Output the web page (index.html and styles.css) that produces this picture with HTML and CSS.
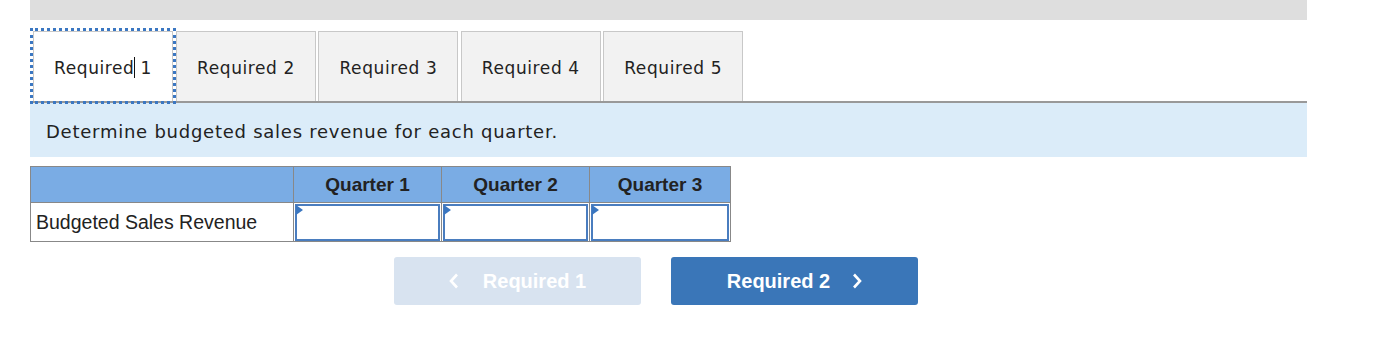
FILE: index.html
```html
<!DOCTYPE html>
<html lang="en">
<head>
    <meta charset="UTF-8">
    <title>Required 1</title>
    <link rel="stylesheet" href="styles.css">
</head>
<body>
    <div class="wrap">
        <div class="topbar"></div>

        <div class="tabs">
            <div class="tab active">Required<span class="caret"></span>&nbsp;1</div>
            <div class="tab">Required 2</div>
            <div class="tab">Required 3</div>
            <div class="tab">Required 4</div>
            <div class="tab">Required 5</div>
        </div>

        <div class="question">Determine budgeted sales revenue for each quarter.</div>

        <table class="grid">
            <tr>
                <th class="blank"></th>
                <th>Quarter 1</th>
                <th>Quarter 2</th>
                <th class="last">Quarter 3</th>
            </tr>
            <tr>
                <td class="label">Budgeted Sales Revenue</td>
                <td class="cell"><div class="box"></div></td>
                <td class="cell"><div class="box"></div></td>
                <td class="cell"><div class="box"></div></td>
            </tr>
        </table>

        <div class="nav">
            <button class="nav-btn prev">
                <svg class="chev" width="10" height="16" viewBox="0 0 10 16"><path d="M8 1.5 L2 8 L8 14.5" fill="none" stroke="#fff" stroke-width="2.6"/></svg>
                Required 1
            </button>
            <button class="nav-btn next">
                Required 2
                <svg class="chev" width="10" height="16" viewBox="0 0 10 16"><path d="M2 1.5 L8 8 L2 14.5" fill="none" stroke="#fff" stroke-width="2.6"/></svg>
            </button>
        </div>
    </div>
</body>
</html>
```

FILE: styles.css
```css
body {
    margin: 0;
    background: #fff;
    font-family: "DejaVu Sans", Verdana, sans-serif;
    color: #222;
}
.wrap {
    width: 1277px;
    margin-left: 30px;
}
.topbar {
    height: 20px;
    background: #dedede;
}

/* tabs */
.tabs {
    display: flex;
    margin-top: 11px;
    border-bottom: 2px solid #999;
    height: 70px;
}
.tab {
    width: 140px;
    flex: none;
    height: 70px;
    box-sizing: border-box;
    border: 1px solid #c8c8c8;
    border-bottom: none;
    background: #f2f2f2;
    margin-right: 2.4px;
    display: flex;
    align-items: center;
    justify-content: center;
    padding-top: 2px;
    font-size: 17px;
    letter-spacing: 0.6px;
    color: #222;
}
.tab.active {
    background: #fff;
    outline: 3px dotted #3b77c2;
    margin-left: 3px;
    margin-right: 3px;
}
.caret {
    display: inline-block;
    width: 1px;
    height: 21px;
    background: #111;
    margin-left: -1px;
}

.question {
    background: #dbecf9;
    height: 54px;
    padding-left: 16px;
    padding-top: 3px;
    box-sizing: border-box;
    display: flex;
    align-items: center;
    font-size: 18px;
    letter-spacing: 0.75px;
    color: #222;
}

/* table */
.grid {
    border-collapse: collapse;
    margin-top: 9px;
    font-family: "Liberation Sans", Arial, sans-serif;
    font-size: 19px;
}
.grid th {
    background: #7aace4;
    border: 1px solid #888;
    height: 35px;
    width: 147px;
    font-weight: bold;
    color: #222;
    padding: 0;
}
.grid th.blank {
    width: 262px;
}
.grid th.last {
    width: 140px;
}
.grid td {
    border: 1px solid #888;
    height: 37px;
    padding: 0;
}
.grid td.label {
    padding-left: 5px;
    font-size: 19.5px;
    color: #222;
}
.grid td.cell {
    padding: 1px 1px 0 1px;
}
.box {
    position: relative;
    height: 37px;
    border: 2px solid #4a7dbf;
    box-sizing: border-box;
    background: #fff;
}
.box::before {
    content: "";
    position: absolute;
    left: -1px;
    top: -1px;
    border-top: 5px solid transparent;
    border-bottom: 5px solid transparent;
    border-left: 7px solid #3a76c0;
}

/* nav buttons */
.nav {
    display: flex;
    gap: 30px;
    margin-top: 15px;
    margin-left: 364px;
}
.nav-btn {
    width: 247px;
    height: 48px;
    border: none;
    border-radius: 3px;
    color: #fff;
    font-family: "Liberation Sans", Arial, sans-serif;
    font-size: 20px;
    font-weight: bold;
    display: flex;
    align-items: center;
    justify-content: center;
    padding: 0;
}
.prev {
    background: #d8e3f0;
}
.prev .chev {
    margin-right: 24px;
}
.next {
    background: #3a76b8;
}
.next .chev {
    margin-left: 22px;
}
```
